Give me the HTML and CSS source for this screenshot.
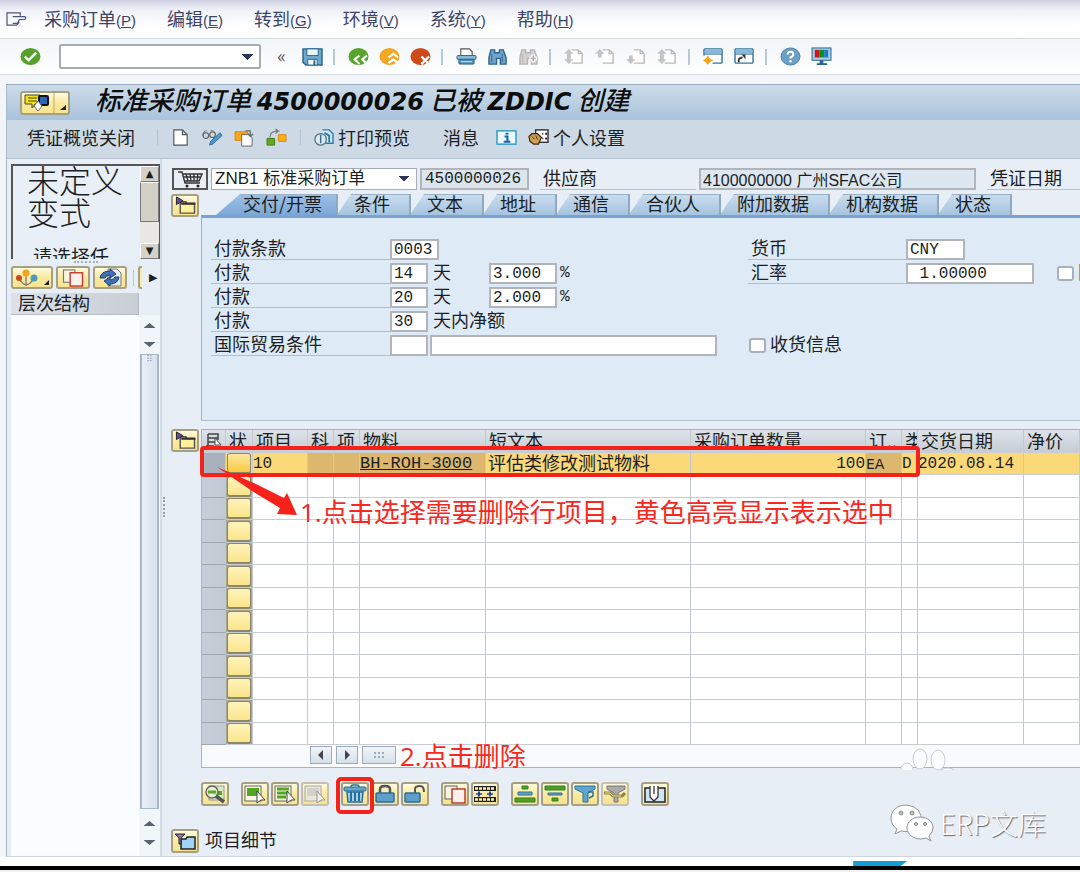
FILE: index.html
```html
<!DOCTYPE html>
<html lang="zh-CN">
<head>
<meta charset="utf-8">
<title>标准采购订单</title>
<link rel="stylesheet" href="styles.css">
</head>
<body>
<svg class="defs" aria-hidden="true">
  <symbol id="folder" viewBox="0 0 24 20"><path d="M7 6h6l1 2h8v10H7z" fill="#ffef9d" stroke="#555" stroke-width="1.5"/><path d="M8 8h15" stroke="#333" stroke-width="2.500"/><path d="M3 1l7 4-7 4z" fill="#6a4a9a" stroke="#222"/></symbol>
  <symbol id="page" viewBox="0 0 22 20"><path d="M8 3h7l4 4v10H8" fill="#fff" stroke="#bbb" stroke-width="1.5"/><path d="M15 3v4h4" fill="none" stroke="#bbb" stroke-width="1.5"/></symbol>
  <symbol id="up" viewBox="0 0 22 20"><path d="M5 2l5 5H7v4H3V7H0z" fill="#c4c4c4"/></symbol>
  <symbol id="down" viewBox="0 0 22 20"><path d="M5 18l5-5H7V9H3v4H0z" fill="#c4c4c4"/></symbol>
  <symbol id="binoc" viewBox="0 0 22 20"><path d="M4 3h4v3h5V3h4l3 8v7h-6v-6h-4v6H2v-7z" fill="currentColor" stroke="var(--edge)" stroke-width="1.5"/><path d="M5 7v9M16 7v9" stroke="var(--edge)" stroke-width="1"/></symbol>
  <symbol id="win" viewBox="0 0 22 20"><rect x="1" y="2" width="19" height="15" rx="1" fill="#fff" stroke="#33759c" stroke-width="1.5"/><path d="M2 3h17v4H2z" fill="#8bb8d8"/><path d="M1 7.500h19" stroke="#33759c"/></symbol>
  <symbol id="copy" viewBox="0 0 24 20"><rect x="2" y="2" width="12" height="13" fill="#f7f4df" stroke="#777" stroke-width="1.200"/><rect x="9" y="5" width="13" height="14" fill="#fdf1ee" stroke="#c43a2c" stroke-width="1.500"/></symbol>
</svg>

<nav class="menu" aria-label="菜单">
  <button class="plain" aria-label="窗口菜单"><svg class="ico" viewBox="0 0 22 20"><path d="M15 6V3H1v13h10l3-3M7 7h13q2 2-1 3h-5q-1 4-3 4H7" fill="none" stroke="#4b577f" stroke-width="1.300"/></svg></button>
  <a href="#">采购订单<small>(<u>P</u>)</small></a>
  <a href="#">编辑<small>(<u>E</u>)</small></a>
  <a href="#">转到<small>(<u>G</u>)</small></a>
  <a href="#">环境<small>(<u>V</u>)</small></a>
  <a href="#">系统<small>(<u>Y</u>)</small></a>
  <a href="#">帮助<small>(<u>H</u>)</small></a>
</nav>

<div class="tools">
  <button class="plain" aria-label="确认"><svg class="ico" viewBox="0 0 22 20"><ellipse cx="11" cy="10" rx="10.500" ry="9" fill="#55a12c"/><path d="M5 10l4 4 8-8" fill="none" stroke="#fff" stroke-width="2.600"/></svg></button>
  <select class="command" aria-label="命令"><option></option></select>
  <button class="plain chev" aria-label="收起">«</button>
  <button class="plain" aria-label="保存"><svg class="ico" viewBox="0 0 22 20"><path d="M1 2h20v17H4l-3-3z" fill="#6fa9cf" stroke="#27648a" stroke-width="1.500"/><path d="M5 2h12v7H5z" fill="#e9f3fa" stroke="#27648a"/><path d="M6 13h10v6H6z" fill="#f5fafd" stroke="#27648a"/><path d="M12 14h2v5h-2z" fill="#27648a"/></svg></button>
  <i class="sep"></i>
  <button class="plain" aria-label="返回"><svg class="ico" viewBox="0 0 22 20"><ellipse cx="11" cy="10" rx="10.500" ry="9" fill="#58a42c"/><path d="M12 9l-5 4 5 5M20 9l-5 4 5 5" fill="none" stroke="#fff" stroke-width="2.200"/></svg></button>
  <button class="plain" aria-label="退出"><svg class="ico" viewBox="0 0 22 20"><ellipse cx="11" cy="10" rx="10.500" ry="9" fill="#f5a623"/><path d="M10 11l5-4 5 4M10 17l5-4 5 4" fill="none" stroke="#fff" stroke-width="2.200"/></svg></button>
  <button class="plain" aria-label="取消"><svg class="ico" viewBox="0 0 22 20"><ellipse cx="11" cy="10" rx="10.500" ry="9" fill="#cf4a1b"/><path d="M12 10l8 8M20 10l-8 8" fill="none" stroke="#fff" stroke-width="2.400"/></svg></button>
  <i class="sep"></i>
  <button class="plain" aria-label="打印"><svg class="ico" viewBox="0 0 22 20"><path d="M5 9V2h9l3 3v4" fill="#fff" stroke="#555" stroke-width="1.200"/><rect x="1" y="9" width="20" height="4" rx="1" fill="#8bbbd9" stroke="#27648a"/><rect x="3" y="13" width="16" height="5" rx="1" fill="#4c90b8" stroke="#27648a"/><path d="M5 15.500h12" stroke="#d5e9f5"/></svg></button>
  <button class="plain find" aria-label="查找"><svg class="ico"><use href="#binoc"/></svg></button>
  <button class="plain off" aria-label="继续查找"><svg class="ico" viewBox="0 0 22 20"><use href="#binoc" width="22" height="20"/><path d="M16 8v8M12 12h8" stroke="#fff" stroke-width="4"/><path d="M16 9v6M13 12h6" stroke="#aaa" stroke-width="1.500"/></svg></button>
  <i class="sep"></i>
  <button class="plain" aria-label="首页"><svg class="ico" viewBox="0 0 22 20"><use href="#page" width="22" height="20"/><use href="#up" width="22" height="20"/><use href="#down" width="22" height="20"/></svg></button>
  <button class="plain" aria-label="上一页"><svg class="ico" viewBox="0 0 22 20"><use href="#page" width="22" height="20"/><use href="#up" width="22" height="20"/></svg></button>
  <button class="plain" aria-label="下一页"><svg class="ico" viewBox="0 0 22 20"><use href="#page" width="22" height="20"/><use href="#down" width="22" height="20"/></svg></button>
  <button class="plain" aria-label="末页"><svg class="ico" viewBox="0 0 22 20"><use href="#page" width="22" height="20"/><use href="#up" width="22" height="20"/><use href="#down" width="22" height="20"/></svg></button>
  <i class="sep"></i>
  <button class="plain" aria-label="新建会话"><svg class="ico" viewBox="0 0 22 20"><use href="#win" width="22" height="20"/><path d="M0 9h10v10H0z" fill="#fff"/><path d="M5 9l2 3 4 2-4 2-2 3-2-3-3-2 3-2z" fill="#f6a413"/></svg></button>
  <button class="plain" aria-label="快捷方式"><svg class="ico" viewBox="0 0 22 20"><use href="#win" width="22" height="20"/><path d="M5 16q-1-5 4-5" fill="none" stroke="#333" stroke-width="2"/><path d="M8 8h4v5z" fill="#333"/></svg></button>
  <i class="sep"></i>
  <button class="plain" aria-label="帮助"><svg class="ico" viewBox="0 0 22 20"><ellipse cx="11" cy="10" rx="10" ry="9" fill="#6c9fc6" stroke="#4a7ca5"/><path d="M8 8q0-3 3-3t3 2.500q0 2-3 3.500v1" fill="none" stroke="#fff" stroke-width="2.200"/><circle cx="11" cy="15" r="1.300" fill="#fff"/></svg></button>
  <button class="plain" aria-label="布局"><svg class="ico" viewBox="0 0 22 20"><rect x="1" y="1" width="20" height="13" fill="#a8cbe2" stroke="#27648a"/><path d="M4 3h5v8H4z" fill="#d4121b"/><path d="M9 3h5v8H9z" fill="#0a8f27"/><path d="M14 3h4v8h-4z" fill="#1c77cf"/><path d="M9 14h4v3h4v2H6v-2h3z" fill="#27648a"/></svg></button>
</div>

<main class="frame">
  <header class="title">
    <button class="yb split" aria-label="服务"><svg viewBox="0 0 46 20"><path d="M3 2h15v9h-5l-3 4v-4H3z" fill="#f6e512" stroke="#443"/><path d="M6 5h9M6 8h9" stroke="#443"/><rect x="17" y="3" width="9" height="9" rx="1" fill="#2d68b8" stroke="#112" stroke-width="2"/><path d="M12 13l4-5 4 5-4 5z" fill="#fff" stroke="#666"/><path d="M32 0v20" stroke="#bca95a"/><path d="M44 12v5h-6z" fill="#222"/></svg></button>
    <h1>标准采购订单 <b>4500000026</b> 已被 <b>ZDDIC</b> 创建</h1>
  </header>
  <div class="actions">
    <button class="plain">凭证概览关闭</button>
    <i class="sep first"></i>
    <button class="plain" aria-label="创建"><svg class="ico" viewBox="0 0 22 20"><path d="M4 2h9l5 5v11H4zM13 2v5h5" fill="#fff" stroke="#555" stroke-width="1.200"/></svg></button>
    <button class="plain" aria-label="显示/更改"><svg class="ico" viewBox="0 0 22 20"><path d="M1 8q0-5 4-5M9 3h3" fill="none" stroke="#666"/><circle cx="4" cy="8" r="3" fill="none" stroke="#666" stroke-width="1.300"/><circle cx="11" cy="7" r="3" fill="none" stroke="#666" stroke-width="1.300"/><path d="M8 18l1-4 10-9 2 3-10 9z" fill="#4b9ad0" stroke="#2c6d99"/></svg></button>
    <button class="plain" aria-label="其他采购订单"><svg class="ico" viewBox="0 0 22 20"><path d="M1 4h13v9H1z" fill="#f8a61c" stroke="#d98808"/><path d="M8 7h7l4 3v9H8z" fill="#fff" stroke="#666"/><path d="M12 3h5v5M15 6l2 3 3-3" fill="none" stroke="#666" stroke-width="1.300"/></svg></button>
    <button class="plain" aria-label="复制"><svg class="ico" viewBox="0 0 22 20"><path d="M4 10q0-7 9-7l-3-2m3 2l-3 3" fill="none" stroke="#777" stroke-width="1.200"/><path d="M1 11h8v7H1z" fill="#62a820" stroke="#417d10"/><path d="M13 7h8v7h-8z" fill="#faae18" stroke="#d98808"/></svg></button>
    <i class="sep"></i>
    <button class="plain pair"><svg class="ico" viewBox="0 0 22 20"><path d="M10 2h7l4 4v10h-8" fill="#d7ecf9" stroke="#2b7da8" stroke-width="1.500"/><path d="M12 5l5 3v7" fill="none" stroke="#2b7da8" stroke-width="2"/><circle cx="8" cy="12" r="6" fill="#dceaf3" stroke="#5e7c90" stroke-width="1.500"/><path d="M8 7v9" stroke="#3c6a88" stroke-width="1.500"/></svg>打印预览</button>
    <button class="plain wide">消息</button>
    <button class="plain" aria-label="信息"><svg class="ico" viewBox="0 0 22 20"><rect x="1" y="3" width="20" height="14" fill="#e9fbff" stroke="#2b99bf" stroke-width="1.500"/><path d="M9 9h3v5M8 14.500h7" fill="none" stroke="#1565ae" stroke-width="2.200"/><path d="M10 5h3v2h-3z" fill="#1565ae"/></svg></button>
    <button class="plain pair"><svg class="ico" viewBox="0 0 22 20"><rect x="8" y="2" width="13" height="13" fill="#fff" stroke="#333" stroke-width="1.500"/><path d="M15 6h1M18 6h2M15 11h1M18 11h2" stroke="#222" stroke-width="2"/><path d="M1 9l3-3h6l4 4-3 7H6l-4-3z" fill="#d2a056" stroke="#3b2a12" stroke-width="1.300"/><path d="M4 9l3 3M8 8l2 4" stroke="#3b2a12"/></svg>个人设置</button>
  </div>

  <div class="work">
    <aside class="side">
      <div class="note">
        <div class="note-text"><p class="big">未定义<br>变式</p><p class="hint">请选择任</p></div>
        <div class="oldbar"><button aria-label="向上">▲</button><i class="thumb"></i><button aria-label="向下">▼</button></div>
      </div>
      <i class="grip"></i>
      <div class="side-tools">
        <button class="yb w42" aria-label="视图"><svg viewBox="0 0 38 19"><path d="M13 5v12M6 10q3 6 7 7 5-1 8-7" fill="none" stroke="#777" stroke-width="1.300"/><circle cx="13" cy="5" r="3.500" fill="#f5a31b"/><circle cx="6" cy="10" r="3" fill="#c74a20"/><circle cx="21" cy="10" r="3.500" fill="#4f9ab8"/><path d="M36 12v5h-5z" fill="#222"/></svg></button>
        <button class="yb w34" aria-label="复制"><svg viewBox="0 0 30 19"><use href="#copy" x="3" y="0" width="24" height="19"/></svg></button>
        <button class="yb w34" aria-label="刷新"><svg viewBox="0 0 30 19"><path d="M13 1h9l4 4v13H13z" fill="#e8eef5" stroke="#777"/><path d="M5 10q1-7 10-7V1l6 5-6 4V7q-4 0-5 3zM24 9q-1 7-9 7v2l-6-5 6-4v3q4 0 5-3z" fill="#3f70b8" stroke="#1d3f7c"/></svg></button>
        <i class="sep"></i><i class="cut"></i>
        <button class="plain more" aria-label="更多">▶</button>
      </div>
      <div class="tree">
        <div class="tree-main"><h2>层次结构</h2></div>
        <div class="bar"><i class="tri u"></i><i class="tri d"></i><i class="track">⠿</i><i class="tri u"></i><i class="tri d"></i></div>
      </div>
    </aside>
    <div class="splitter"><i></i></div>

    <section class="content">
      <div class="head">
        <button class="cart" aria-label="购物车"><svg viewBox="0 0 32 18"><path d="M4 2h4l3 11h15M9 4h19l-3 7H11M12 4l2 7M16 4l1 7M20 4v7M24 4l-1 7M10 7h17" fill="none" stroke="#333" stroke-width="1.400"/><circle cx="13" cy="16" r="1.500" fill="#222"/><circle cx="24" cy="16" r="1.500" fill="#222"/></svg></button>
        <select class="type" aria-label="订单类型"><option>ZNB1 标准采购订单</option></select>
        <input class="num" aria-label="订单编号" value="4500000026" readonly>
        <label class="line vendor-l" for="vendor">供应商</label>
        <input class="vendor" id="vendor" value="4100000000 广州SFAC公司" readonly>
        <span class="line date-l">凭证日期</span>
      </div>

      <div class="block">
        <button class="yb sq" aria-label="抬头"><svg viewBox="0 0 24 19"><use href="#folder" width="24" height="19"/></svg></button>
        <div class="tabbox">
          <div class="tabs" role="tablist">
            <button role="tab" class="on" aria-selected="true">交付/开票</button>
            <button role="tab">条件</button><button role="tab">文本</button><button role="tab">地址</button><button role="tab">通信</button><button role="tab">合伙人</button><button role="tab">附加数据</button><button role="tab">机构数据</button><button role="tab">状态</button>
          </div>
          <div class="panel">
            <div class="form left">
              <div class="row"><label class="line" for="t0">付款条款</label><input id="t0" class="w49" value="0003"></div>
              <div class="row"><label class="line" for="t1">付款</label><input id="t1" class="w38" value="14"><span class="unit">天</span><input class="w68" aria-label="折扣一" value="3.000"><span class="pct">%</span></div>
              <div class="row"><label class="line" for="t2">付款</label><input id="t2" class="w38" value="20"><span class="unit">天</span><input class="w68" aria-label="折扣二" value="2.000"><span class="pct">%</span></div>
              <div class="row"><label class="line" for="t3">付款</label><input id="t3" class="w38" value="30"><span class="unit">天内净额</span></div>
              <div class="row"><label class="line" for="t4">国际贸易条件</label><input id="t4" class="w38"><input class="inco" aria-label="贸易条件说明"></div>
            </div>
            <div class="form right">
              <div class="row"><label class="line" for="c0">货币</label><input id="c0" class="w59" value="CNY"></div>
              <div class="row"><label class="line" for="c1">汇率</label><input id="c1" class="w128" value=" 1.00000"><label class="tick fixed"><input type="checkbox">固定</label></div>
              <div class="row"></div><div class="row"></div>
              <div class="row"><label class="tick"><input type="checkbox">收货信息</label></div>
            </div>
          </div>
        </div>
      </div>

      <div class="block items">
        <button class="yb sq" aria-label="项目概览"><svg viewBox="0 0 24 19"><use href="#folder" width="24" height="19"/></svg></button>
        <div class="grid">
          <table>
            <colgroup><col class="c24"><col class="c27"><col class="c55"><col class="c26"><col class="c26"><col class="c126"><col class="c205"><col class="c175"><col class="c36"><col class="c16"><col class="c106"><col></colgroup>
            <thead><tr><th><svg class="selall" viewBox="0 0 18 16"><path d="M3 2h10v6M3 2v13M3 6h10M3 10h7M1 14h8" fill="none" stroke="#444" stroke-width="1.500"/><path d="M10 6l6 7h-6z" fill="#fff" stroke="#444"/></svg></th><th>状</th><th>项目</th><th>科</th><th>项</th><th>物料</th><th>短文本</th><th>采购订单数量</th><th>订..</th><th>类</th><th>交货日期</th><th>净价</th></tr></thead>
            <tbody>
              <tr class="sel"><td></td><td><button aria-label="状态"></button></td><td>10</td><td class="k"></td><td class="k"></td><td class="k"><a href="#">BH-ROH-3000</a></td><td class="zh">评估类修改测试物料</td><td class="r">100</td><td class="k ea">EA</td><td>D</td><td>2020.08.14</td><td></td></tr>
              <tr><td></td><td><button aria-label="状态"></button></td><td></td><td></td><td></td><td></td><td></td><td></td><td></td><td></td><td></td><td></td></tr>
              <tr><td></td><td><button aria-label="状态"></button></td><td></td><td></td><td></td><td></td><td></td><td></td><td></td><td></td><td></td><td></td></tr>
              <tr><td></td><td><button aria-label="状态"></button></td><td></td><td></td><td></td><td></td><td></td><td></td><td></td><td></td><td></td><td></td></tr>
              <tr><td></td><td><button aria-label="状态"></button></td><td></td><td></td><td></td><td></td><td></td><td></td><td></td><td></td><td></td><td></td></tr>
              <tr><td></td><td><button aria-label="状态"></button></td><td></td><td></td><td></td><td></td><td></td><td></td><td></td><td></td><td></td><td></td></tr>
              <tr><td></td><td><button aria-label="状态"></button></td><td></td><td></td><td></td><td></td><td></td><td></td><td></td><td></td><td></td><td></td></tr>
              <tr><td></td><td><button aria-label="状态"></button></td><td></td><td></td><td></td><td></td><td></td><td></td><td></td><td></td><td></td><td></td></tr>
              <tr><td></td><td><button aria-label="状态"></button></td><td></td><td></td><td></td><td></td><td></td><td></td><td></td><td></td><td></td><td></td></tr>
              <tr><td></td><td><button aria-label="状态"></button></td><td></td><td></td><td></td><td></td><td></td><td></td><td></td><td></td><td></td><td></td></tr>
              <tr><td></td><td><button aria-label="状态"></button></td><td></td><td></td><td></td><td></td><td></td><td></td><td></td><td></td><td></td><td></td></tr>
              <tr><td></td><td><button aria-label="状态"></button></td><td></td><td></td><td></td><td></td><td></td><td></td><td></td><td></td><td></td><td></td></tr>
              <tr><td></td><td><button aria-label="状态"></button></td><td></td><td></td><td></td><td></td><td></td><td></td><td></td><td></td><td></td><td></td></tr>
            </tbody>
          </table>
          <div class="hscroll"><button aria-label="向左"><svg viewBox="0 0 20 16"><path d="M12 3v10L7 8z" fill="#445"/></svg></button><button aria-label="向右"><svg viewBox="0 0 20 16"><path d="M8 3v10l5-5z" fill="#445"/></svg></button><button class="hthumb" aria-label="滚动"><svg viewBox="0 0 32 16"><path d="M11 6h11M11 10h11" stroke="#8795a5" stroke-width="1.500" stroke-dasharray="2 2"/></svg></button></div>
          <div class="mark rect"></div>
          <svg class="mark arrow" viewBox="0 0 82 50"><path d="M1 0L40 17 68 31l3-5L81 48l-20-1 3-6-28-17z" fill="#f5211b"/></svg>
          <p class="mark text1">1.点击选择需要删除行项目，黄色高亮显示表示选中</p>
          <p class="mark text2">2.点击删除</p>
          <svg class="mark paw" viewBox="0 0 56 24"><g fill="#fbfcfd" stroke="#c9cdd2"><path d="M2 23a6 7 0 0112 0"/><ellipse cx="21" cy="12" rx="7" ry="10"/><ellipse cx="39" cy="13" rx="7" ry="10"/><path d="M42 23q7-4 13 0"/></g></svg>
        </div>
      </div>

      <div class="bottom-tools">
        <div><button class="yb ib" aria-label="明细"><svg viewBox="2 1 24 20"><rect x="8" y="3" width="15" height="14" fill="#d8e9c2" stroke="#999"/><path d="M12 8h9v4h-9z" fill="#5ba823"/><circle cx="11" cy="9" r="6" fill="#e7f1dc" fill-opacity=".85" stroke="#666" stroke-width="1.500"/><path d="M7 9h8" stroke="#5ba823" stroke-width="3"/><path d="M15 13l8 6" stroke="#555" stroke-width="3.500"/></svg></button></div>
        <div>
          <button class="yb ib" aria-label="全选"><svg viewBox="2 1 24 20"><rect x="4" y="3" width="16" height="15" fill="#f7f8ea" stroke="#666"/><path d="M6 5h12v8H6z" fill="#54a51f"/><path d="M16 8l8 9h-4l-4 3z" fill="#fff" stroke="#444"/></svg></button>
          <button class="yb ib" aria-label="选择块"><svg viewBox="2 1 24 20"><rect x="4" y="3" width="16" height="15" fill="#f7f8ea" stroke="#666"/><path d="M6 6h12M6 10h12M6 14h9" stroke="#54a51f" stroke-width="3"/><path d="M16 8l8 9h-4l-4 3z" fill="#fff" stroke="#444"/></svg></button>
          <button class="yb ib dis" aria-label="取消全选"><svg viewBox="2 1 24 20"><rect x="4" y="3" width="16" height="15" fill="#e9e7da" stroke="#aaa"/><path d="M6 5h12v8H6z" fill="#d3d2ca"/><path d="M16 8l8 9h-4l-4 3z" fill="#eee" stroke="#999"/></svg></button>
        </div>
        <div>
          <button class="yb ib del" aria-label="删除"><svg viewBox="2 1 24 20"><path d="M10 4q0-2 2-2h4q2 0 2 2" fill="none" stroke="#276f9b" stroke-width="1.500"/><rect x="3" y="4" width="22" height="4" rx="1" fill="#66a5c9" stroke="#276f9b"/><path d="M6 9h16l-1 10H7z" fill="#a9d0e6" stroke="#276f9b" stroke-width="1.500"/><path d="M10 9v9M14 9v9M18 9v9" stroke="#276f9b" stroke-width="2"/></svg><i class="mark ring"></i></button>
          <button class="yb ib" aria-label="锁定"><svg viewBox="2 1 24 20"><path d="M9 10V6q0-3 5-3t5 3v4" fill="none" stroke="#555" stroke-width="2.500"/><rect x="5" y="10" width="18" height="9" rx="1" fill="#5e9fca" stroke="#2c6f98" stroke-width="1.500"/></svg></button>
          <button class="yb ib" aria-label="解锁"><svg viewBox="2 1 24 20"><path d="M14 10V6q0-3 5-3 4 0 4 6" fill="none" stroke="#555" stroke-width="2"/><rect x="4" y="10" width="15" height="9" rx="1" fill="#5e9fca" stroke="#2c6f98" stroke-width="1.500"/></svg></button>
        </div>
        <div>
          <button class="yb ib" aria-label="复制"><svg viewBox="0 0 24 20"><use href="#copy" width="24" height="20"/></svg></button>
          <button class="yb ib" aria-label="插入"><svg viewBox="2 1 24 20"><path d="M3 3h22v5H3zM3 14h22v5H3z" fill="#222"/><path d="M4 5.500h20M4 16.500h20" stroke="#fff3a0" stroke-width="2.500" stroke-dasharray="3 1"/><path d="M5 11h6M16 11h6" stroke="#223f9a" stroke-width="1.500"/><path d="M8 8.500v5M19 8.500v5" stroke="#223f9a" stroke-width="2"/></svg></button>
        </div>
        <div>
          <button class="yb ib" aria-label="升序"><svg viewBox="2 1 24 20"><path d="M11 3h6v3h-6zM4 15h20v4H4z" fill="#4fa02a" stroke="#39801b"/><path d="M7 9h14v3H7z" fill="#62a4c8" stroke="#2d7399"/></svg></button>
          <button class="yb ib" aria-label="降序"><svg viewBox="2 1 24 20"><path d="M4 3h20v4H4zM11 15h6v3h-6z" fill="#4fa02a" stroke="#39801b"/><path d="M7 10h14v2H7z" fill="#62a4c8" stroke="#2d7399"/></svg></button>
          <button class="yb ib" aria-label="过滤"><svg viewBox="2 1 24 20"><path d="M4 3h20v3l-7 4v9h-5v-9L4 6z" fill="#5fa5cf" stroke="#2d7399"/><path d="M17 9h5v4l-4 2" fill="none" stroke="#2d7399" stroke-width="1.500"/></svg></button>
          <button class="yb ib dis" aria-label="删除过滤"><svg viewBox="2 1 24 20"><path d="M6 3h18v3l-7 4v9h-4v-9L6 6z" fill="#aaa" stroke="#777"/><path d="M3 10h6l3 3h9l3-3" fill="none" stroke="#8b8248" stroke-width="3"/><path d="M4 10h5l3 3h8" fill="none" stroke="#efe3a0"/></svg></button>
        </div>
        <div><button class="yb ib" aria-label="个人设置"><svg viewBox="2 1 24 20"><path d="M4 5h20v14H4z" fill="#cfe6f7" stroke="#222" stroke-width="1.500"/><path d="M9 3v11l4 4 4-4V3M13 3v8" fill="#fff" stroke="#333" stroke-width="1.300"/></svg></button></div>
      </div>

      <div class="detail">
        <button class="yb ib" aria-label="展开"><svg viewBox="2 1 24 20"><path d="M10 9h5l1-2h8v12H10z" fill="#9ed3f5" stroke="#222" stroke-width="1.500"/><path d="M4 4h10l-4 4v6H8V8z" fill="#8a79a8" stroke="#222"/></svg></button>
        <span>项目细节</span>
        <div class="brand"><svg viewBox="0 0 44 38"><g fill="#fff" stroke="#8d9399"><path d="M16 1C7 1 1 7 1 14q0 7 6 11l-2 5 6-3q16 3 20-8Q33 2 16 1z"/><path d="M30 13c-8 0-13 5-13 11s6 11 14 11l5-1 5 3-2-5q4-4 4-8c0-6-5-11-13-11z"/><g fill="#b5bbc1"><circle cx="11" cy="9" r="2"/><circle cx="22" cy="9" r="2"/><circle cx="26" cy="20" r="1.500"/><circle cx="35" cy="20" r="1.500"/></g></g></svg>ERP文库</div>
      </div>
    </section>
  </div>
</main>
<footer class="foot"><i class="tag"></i></footer>
</body>
</html>
```
FILE: styles.css
```css
* { box-sizing: border-box; }
html, body { height: 100%; }
body {
  margin: 0;
  display: flex;
  flex-direction: column;
  overflow: hidden;
  background: #f3f6f9;
  color: #1b1f24;
  font: 18px/20px "Noto Sans CJK SC", sans-serif;
}
button, input, select { font: inherit; color: inherit; margin: 0; padding: 0; border-radius: 0; }
p, h1, h2 { margin: 0; font-weight: 400; }
i { display: block; font-style: normal; }
.defs { display: none; }
.ico { display: block; width: 21px; height: 19px; }
.plain { border: 0; background: none; white-space: nowrap; }

/* menu and standard toolbar */
.menu {
  display: flex;
  align-items: center;
  gap: 31px;
  height: 38px;
  flex: none;
  padding: 0 6px;
  background: linear-gradient(#cfd1e2, #eef1f7 10px, #fdfdff 24px, #fff);
}
.menu .plain { margin-right: -14px; }
.menu a { color: #3d4468; text-decoration: none; white-space: nowrap; }
.menu small { font: 15px/20px "Liberation Sans", sans-serif; }
.tools {
  display: flex;
  align-items: center;
  gap: 10px;
  height: 37px;
  flex: none;
  padding: 0 20px;
  background: linear-gradient(#f1f5f8, #fff);
  border-top: 1px solid #d4dadd;
  border-bottom: 1px solid #d8dde1;
}
.command, .type {
  appearance: none;
  background: #fff conic-gradient(from -45deg at 50% 100%, #2b3358 90deg, transparent 0) right 6px center / 12px 6px no-repeat;
}
.command { width: 202px; height: 25px; margin-left: 8px; border: 2px solid #a9acb0; border-radius: 2px; }
.chev { width: 21px; padding-bottom: 3px; color: #555; }
.sep { width: 5px; height: 16px; border-left: 2px solid #b6c9d8; flex: none; }
.find { color: #73a5cb; --edge: #2b6690; }
.off { color: #d2d2d2; --edge: #b4b4b4; }

/* application frame */
.frame {
  flex: 1;
  min-height: 0;
  margin: 9px 0 0 6px;
  display: flex;
  flex-direction: column;
  border-left: 1px solid #a9b7c6;
  border-top: 1px solid #9aabbd;
  border-bottom: 1px solid #cfd5db;
  background: #e8eef6;
}
.title {
  display: flex;
  align-items: center;
  gap: 25px;
  height: 35px;
  flex: none;
  padding-left: 13px;
  background: linear-gradient(#cddcea, #b7cde0 60%, #a8c3dc);
}
.title h1 { padding-bottom: 4px; font-size: 26px; line-height: 28px; font-style: italic; font-weight: 500; color: #0d0d0d; white-space: nowrap; }
.title b { font: italic bold 24px/28px "DejaVu Sans", sans-serif; }
.yb {
  flex: none;
  border: 2px solid #a5a083;
  border-radius: 3px;
  background: linear-gradient(#fffbe0, #faeaa0 50%, #f7e390);
  overflow: hidden;
}
.yb svg { display: block; width: 100%; height: 100%; }
.split { width: 50px; height: 24px; }
.w42 { width: 42px; height: 23px; }
.w34 { width: 34px; height: 23px; }
.sq { width: 28px; height: 23px; }
.ib { width: 28px; height: 24px; }
.dis { border-color: #c4c1b0; }
.actions {
  display: flex;
  align-items: center;
  gap: 11px;
  height: 39px;
  flex: none;
  padding: 0 20px 4px;
  background: #cddae5;
  border-bottom: 1px solid #b4c3cf;
}
.actions .sep { margin: 0 -3px 0 2px; border-color: #b3c4d1; border-left-width: 1px; }
.actions .first { margin-left: 11px; }
.pair { display: flex; align-items: center; gap: 4px; }
.wide { margin: 0 6px 0 22px; }
.work { flex: 1; min-height: 0; display: flex; }

/* left panel */
.side { width: 149px; flex: none; margin-left: 4px; display: flex; flex-direction: column; padding-top: 5px; }
.note { display: flex; height: 95px; flex: none; overflow: hidden; border: 2px solid #555; border-right-width: 1px; border-bottom: 0; background: #e8eff7; }
.note-text { flex: 1; padding-left: 14px; white-space: nowrap; }
.big { margin-top: -3px; font-size: 32px; line-height: 32px; font-weight: 300; }
.hint { padding: 19px 0 0 6px; font-size: 19px; }
.oldbar { width: 19px; display: flex; flex-direction: column; background: #e9e7e4; }
.oldbar button { height: 16px; border: 1px solid #777; border-top-color: #fff; border-left-color: #fff; background: #d5d2ca; font: 10px/12px "DejaVu Sans", sans-serif; }
.thumb { height: 40px; margin-bottom: auto; border: 1px solid #777; border-top-color: #fff; background: #d3d0c8; }
.grip { width: 24px; height: 3px; margin: 2px auto; border-top: 2px dotted #a9b2bc; flex: none; }
.side-tools { display: flex; align-items: center; gap: 3px; height: 23px; flex: none; }
.side-tools .sep { border-left-width: 1px; margin-left: 3px; width: 2px; }
.cut { width: 4px; height: 23px; border: 2px solid #a5a083; border-right: 0; border-radius: 3px 0 0 3px; background: #faeaa0; }
.more { margin-left: 4px; font: 11px/20px "DejaVu Sans", sans-serif; }
.tree { flex: 1; display: flex; margin-top: 4px; }
.tree-main { flex: 1; background: #fafdff; }
.tree h2 { height: 22px; padding-left: 7px; font-size: 18px; line-height: 18px; background: linear-gradient(to right, #dde2e8, #c9ced5); border: 1px solid #b5bbc3; border-width: 0 1px 1px 0; }
.bar { width: 21px; margin-top: 22px; padding: 8px 1px 11px; display: flex; flex-direction: column; align-items: center; gap: 14px; background: #f1f6fa; }
.tri { width: 12px; height: 5px; background: #56626e; flex: none; }
.u { clip-path: polygon(0 100%, 50% 0, 100% 100%); }
.d { clip-path: polygon(0 0, 100% 0, 50% 100%); }
.track { flex: 1; align-self: stretch; margin: -7px 0 -2px; border: 1px solid #a9b8c8; border-width: 1px 2px; background: linear-gradient(to right, #e9eff6, #d9e3ee); color: #9aa5b0; font: 9px/8px "DejaVu Sans", sans-serif; text-align: center; }
.splitter { width: 11px; flex: none; padding: 338px 0 0 1px; border-left: 2px solid #d3dbe4; }
.splitter i { width: 2px; height: 20px; border-left: 2px dotted #93a0ac; }

/* document header */
.content { flex: 1; min-width: 0; display: flex; flex-direction: column; padding-top: 9px; }
.head { display: flex; gap: 3px; height: 22px; padding-left: 1px; white-space: nowrap; }
.head > * { flex: none; }
.cart { width: 36px; border: 2px solid #555; background: #e8eef4; }
.cart svg { display: block; width: 32px; height: 18px; }
input { border: 2px solid #b1b5ba; background: #fff; padding: 0 2px; font-family: "Liberation Mono", "Noto Sans CJK SC", monospace; font-size: 16px; height: 21px; min-width: 0; }
.type { width: 206px; border: 1px solid #a7acb2; padding-left: 3px; font-family: "Liberation Sans", "Noto Sans CJK SC", sans-serif; font-size: 17px; }
.num { width: 109px; height: 22px; padding: 0 3px; background: #dde5ed; }
.line { border-bottom: 1px solid #b6bfc8; white-space: nowrap; line-height: 16px; padding-left: 3px; }
.head .line { line-height: 19px; }
.vendor-l { width: 156px; margin-left: 8px; }
.head .vendor { width: 277px; height: 22px; background: #dce7f1; font-family: "Liberation Sans", "Noto Sans CJK SC", sans-serif; }
.head .date-l { flex: 1 1 0; min-width: 0; margin-left: 8px; }
.block { display: flex; gap: 2px; margin-top: 4px; }
.tabbox { flex: 1; min-width: 0; }
.tabs { display: flex; height: 21px; padding-left: 15px; }
.tabs button {
  flex: none;
  padding: 0 19px 3px 16px;
  border: 0;
  border-top: 1px solid #9ab2c9;
  border-right: 2px solid #8fa8c0;
  background: linear-gradient(#c9dcee, #a5c3e0);
  clip-path: polygon(0 90%, 13px 0, 100% 0, 100% 100%, 0 100%);
  line-height: 17px;
}
.tabs .on { padding: 0 14px 3px 27px; background: linear-gradient(#9dc0e5, #7ba7d6); clip-path: polygon(0 100%, 24px 0, 100% 0, 100% 100%); }
.panel { display: flex; padding: 21px 0 61px 9px; border: 1px solid #93b3d3; border-top: 3px solid #7ba3cf; border-right: 0; border-bottom-color: #b0c3d4; background: #deeaf5; }
.left { width: 537px; flex: none; }
.right { flex: 1; min-width: 0; overflow: hidden; }
.row { display: flex; height: 21px; margin-bottom: 3px; white-space: nowrap; }
.row > * { flex: none; }
.left .line { width: 179px; }
.right .line { width: 158px; }
.w38 { width: 38px; }
.w49 { width: 49px; }
.w59 { width: 59px; }
.w68 { width: 68px; }
.w128 { width: 128px; white-space: pre; }
.inco { width: 287px; margin-left: 2px; }
.unit { min-width: 61px; padding-left: 5px; line-height: 16px; }
.pct { padding-left: 3px; font: 16px/20px "Liberation Mono", monospace; }
.tick { display: flex; gap: 4px; line-height: 16px; }
.tick input { appearance: none; width: 17px; height: 15px; margin: 3px 0 0 1px; border-radius: 3px; border-color: #aab0b7; }
.fixed { margin-left: 22px; }

/* item overview */
.items { margin-top: 8px; }
.grid { position: relative; flex: 1; min-width: 0; border: 1px solid #9fb5cc; border-right: 0; background: #f8fafb; }
table { width: 100%; table-layout: fixed; border-collapse: separate; border-spacing: 0; font: 16px/20px "Liberation Mono", monospace; }
.c16 { width: 16px; } .c24 { width: 24px; } .c26 { width: 26px; } .c27 { width: 27px; } .c36 { width: 36px; } .c55 { width: 55px; }
.c106 { width: 106px; } .c126 { width: 126px; } .c175 { width: 175px; } .c205 { width: 205px; }
th, td { padding: 0; overflow: hidden; white-space: nowrap; border-right: 1px solid #c3c9cf; border-bottom: 1px solid #c8cdd3; }
th { height: 23px; padding: 0 0 3px 3px; background: linear-gradient(#dde3e9, #c7cdd6); font: 18px/18px "Noto Sans CJK SC", sans-serif; text-align: left; }
.selall { display: block; width: 18px; height: 16px; }
td { height: 22px; background: #fff; }
tr:nth-child(even) td { height: 23px; }
tbody td:first-child { background: linear-gradient(to right, #c7ced7, #c3c9d2); border-bottom-color: #9ea6b0; }
td:nth-child(2) { background: #a7a796; padding: 0 1px; }
td button { display: block; width: 100%; height: 21px; border: 1px solid #8c8768; border-bottom-width: 2px; border-radius: 3px; background: linear-gradient(#fff3bb, #fae58c); }
.sel td { background: #fbd878; }
.sel td.k { background: #ddb76d; }
.sel td:first-child { background: #a9b2bc; }
.sel button { background: linear-gradient(#ffe9a0, #f8c83f); }
td a { color: #1b1f24; font-size: 17px; }
td.zh { font: 18px/18px "Noto Sans CJK SC", sans-serif; padding: 0 0 3px 2px; }
td.r { text-align: right; }
td.ea { font: 14px/20px "DejaVu Sans", sans-serif; }
.hscroll { display: flex; gap: 4px; height: 22px; padding: 1px 0 3px 108px; }
.hscroll button { width: 22px; border: 1px solid #9fabb8; background: linear-gradient(#f0f4f8, #d7e0e9); }
.hscroll .hthumb { width: 34px; }
.hscroll svg { display: block; width: 100%; height: 16px; }

/* annotations over the grid */
.mark { position: absolute; pointer-events: none; }
.rect { left: -2px; top: 16px; width: 720px; height: 31px; border: 4px solid #f5211b; border-radius: 4px; }
.arrow { left: 14px; top: 37px; width: 82px; height: 50px; }
.text1, .text2 { font: 26px/32px "Open Sans", "Noto Sans CJK SC", sans-serif; color: #f5291f; white-space: nowrap; }
.text1 { left: 98px; top: 66px; }
.text2 { left: 198px; top: 310px; }
.paw { left: 697px; top: 317px; width: 56px; height: 24px; }
.del { position: relative; overflow: visible; }
.ring { inset: -7px -7px -10px; border: 4px solid #f5211b; border-radius: 5px; }

/* bottom area */
.bottom-tools { display: flex; gap: 12px; padding: 14px 0 0 30px; }
.bottom-tools > div { display: flex; gap: 2px; }
.detail { display: flex; align-items: center; gap: 6px; height: 24px; margin-top: 23px; }
.detail span { padding-bottom: 4px; }
.brand { display: flex; align-items: center; gap: 6px; height: 24px; margin: -36px 34px 0 auto; font-size: 28px; font-weight: 300; color: #fff; text-shadow: 1px 1px 1px #5f666e; }
.brand svg { width: 44px; height: 38px; }
.foot { flex: none; height: 15px; padding-top: 4px; background: linear-gradient(#fff 9px, #000 9px, #000 13px, #f3f3f3 13px); }
.tag { width: 54px; height: 5px; margin-left: 79%; background: #129fd3; clip-path: polygon(0 0, 100% 0, 88% 100%, 0 100%); }
```
